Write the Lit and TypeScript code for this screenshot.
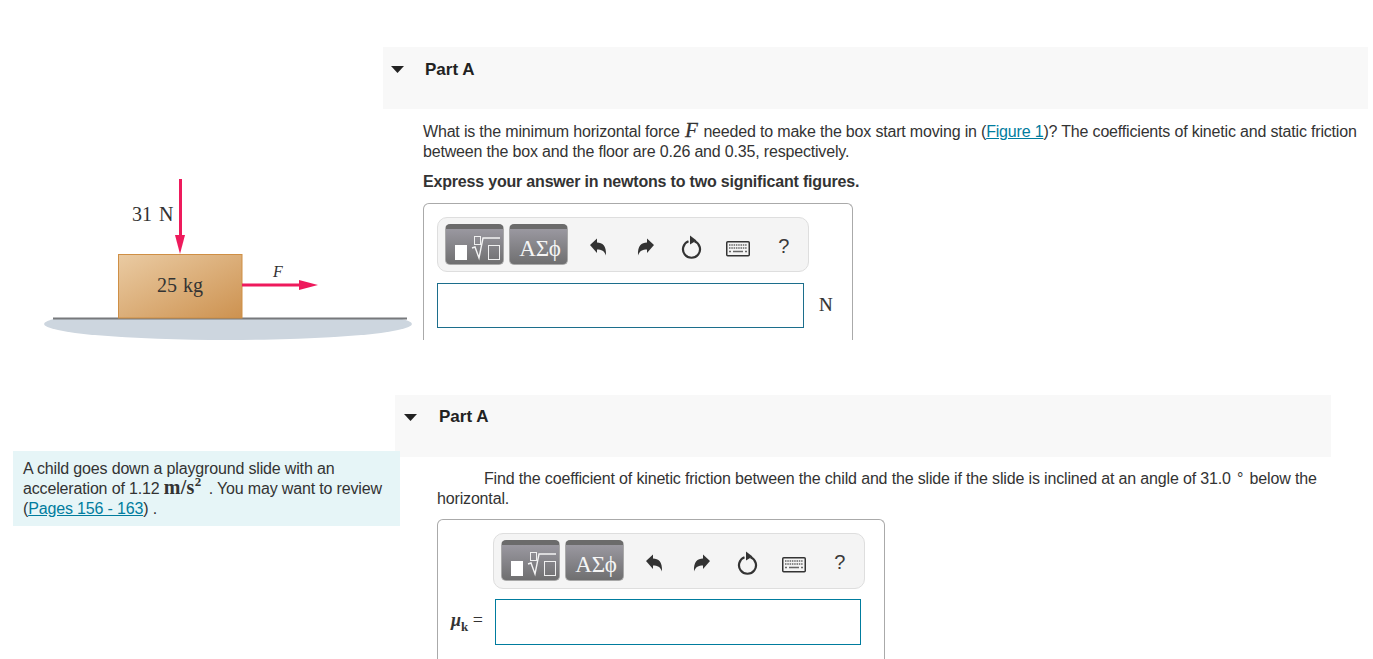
import { LitElement, html, css } from 'lit';
import { customElement } from 'lit/decorators.js';

@customElement('math-toolbar')
export class MathToolbar extends LitElement {
  static styles = css`
    :host {
      display: block;
    }
    .bar {
      box-sizing: border-box;
      width: 372px;
      height: 55px;
      padding: 6px 0 0 7px;
      display: flex;
      background: #f4f4f4;
      border: 1px solid #dedede;
      border-radius: 10px;
    }
    .tall {
      height: 56px;
    }
    .btn {
      box-sizing: border-box;
      flex: none;
      width: 59px;
      height: 41px;
      margin-right: 5px;
      position: relative;
      display: flex;
      align-items: center;
      justify-content: center;
      border: 1px solid #a9a9a9;
      border-top: 5px solid #6b6b6b;
      border-radius: 5px;
      background: linear-gradient(#9a98a0, #6f6f70);
      color: #f5f5f5;
      font: 23px "Liberation Serif", serif;
    }
    .btn svg {
      position: absolute;
      left: -1px;
      top: -5px;
    }
    .greek {
      padding: 4px 0 0 3px;
    }
    .tools {
      display: flex;
      flex: none;
      margin-left: 3px;
    }
    .tool {
      flex: none;
      box-sizing: border-box;
      width: 46.2px;
      height: 41px;
      padding-top: 4px;
      display: flex;
      align-items: center;
      justify-content: center;
      color: #3a3a3a;
      font: 20px "Liberation Sans", sans-serif;
    }
    .keys {
      margin-top: 4px;
    }
    .reset {
      margin-left: 2px;
    }
  `;

  static properties = { tall: { type: Boolean } };
  tall = false;

  protected render() {
    return html`
      <div class="bar ${this.tall ? 'tall' : ''}">
        <div class="btn">
          <svg width="59" height="41" viewBox="0 0 59 41">
            <rect x="10" y="21" width="12" height="15" fill="#fff" />
            <rect x="29.5" y="12.5" width="6" height="8" fill="none" stroke="#f0f0f0" />
            <path d="M27 24l3-1 4 11 4-20h17" fill="none" stroke="#f4f4f4" stroke-width="1.400" />
            <rect x="43.5" y="21.5" width="11" height="14" fill="none" stroke="#f0f0f0" />
          </svg>
        </div>
        <div class="btn"><span class="greek">ΑΣϕ</span></div>
        <div class="tools">
          <div class="tool">
            <svg width="18" height="18" viewBox="0 0 18 18">
              <path d="M0 7l7-6.500v4c5.500 0 9.500 3 9 13-1.500-4.500-4.500-6-9-6v3.500z" fill="#333" />
            </svg>
          </div>
          <div class="tool">
            <svg width="18" height="18" viewBox="0 0 18 18">
              <path d="M18 7l-7-6.500v4c-5.500 0-9.500 3-9 13 1.500-4.500 4.500-6 9-6v3.500z" fill="#333" />
            </svg>
          </div>
          <div class="tool">
            <svg class="reset" width="22" height="26" viewBox="0 0 22 26">
              <path d="M7.500 7.300a8.500 8.500 0 1 0 6 0" fill="none" stroke="#333" stroke-width="2.200" />
              <path d="M9 1.500l6.500 5-6.500 4z" fill="#333" />
            </svg>
          </div>
          <div class="tool">
            <svg class="keys" width="24" height="16" viewBox="0 0 24 16">
              <rect x="0.750" y="0.750" width="22.500" height="14" rx="1" fill="#f4f4f4" stroke="#333" stroke-width="1.500" />
              <path d="M3 4h18M3 7h18" stroke="#666" stroke-width="1.600" stroke-dasharray="1.500 .8" />
              <path d="M3 10.500h2M7 10.500h10M19 10.500h2" stroke="#666" stroke-width="1.600" />
            </svg>
          </div>
          <div class="tool">?</div>
        </div>
      </div>
    `;
  }
}

@customElement('app-root')
export class AppRoot extends LitElement {
  static styles = css`
    :host {
      display: block;
      width: 1373px;
      height: 659px;
      overflow: hidden;
      background: #fff;
      color: #333;
      font: 16px/20px "Liberation Sans", Arial, sans-serif;
      letter-spacing: -0.16px;
    }
    a {
      color: #007c9e;
    }
    p {
      margin: 0;
    }
    .row {
      display: flex;
    }
    .first {
      padding-top: 47px;
      height: 293px;
      box-sizing: content-box;
    }
    .second {
      margin-top: 55px;
    }
    .figure {
      flex: 0 0 383px;
      padding-top: 113px;
    }
    .figure svg {
      display: block;
      overflow: visible;
    }
    .figure text {
      font-family: "Liberation Serif", serif;
      font-size: 20px;
      letter-spacing: 0;
      word-spacing: 1px;
      fill: #333;
    }
    .figure text.load {
      word-spacing: 2px;
    }
    .figure text.force {
      font-size: 16px;
      font-style: italic;
    }
    .intro {
      flex: 0 0 auto;
      box-sizing: border-box;
      position: relative;
      z-index: 1;
      width: 387px;
      height: 75px;
      margin: 56px -5px 0 13px;
      padding: 8px 10px 0;
      background: #e6f5f7;
    }
    .intro .math {
      margin-right: 3px;
    }
    .part-a {
      width: 985px;
    }
    .part-b {
      width: 936px;
    }
    .head {
      height: 62px;
      box-sizing: border-box;
      display: flex;
      background: #f8f8f8;
      font-weight: bold;
      font-size: 17px;
      letter-spacing: 0;
      color: #222;
      padding-top: 12px;
    }
    .part-a .head {
      padding: 13px 0 0 8px;
    }
    .part-b .head {
      padding-left: 9px;
    }
    .caret {
      width: 13px;
      height: 7px;
      margin: 7px 21px 0 0;
      display: block;
    }
    .part-a .caret {
      margin-top: 6px;
    }
    .part-b .caret {
      margin-right: 22px;
    }
    .body-a {
      padding: 13px 0 0 40px;
    }
    .question {
      letter-spacing: -0.18px;
    }
    .body-b {
      padding: 12px 10px 0 42px;
    }
    .indent {
      text-indent: 47px;
    }
    .hint {
      margin-top: 10px;
      font-weight: bold;
      letter-spacing: -0.19px;
    }
    .math {
      font-family: "Liberation Serif", serif;
      font-size: 20px;
      line-height: 0;
      letter-spacing: 0.3px;
    }
    .bold {
      font-weight: bold;
    }
    .math i {
      font-size: 21px;
      margin: 0 1px;
      -webkit-text-stroke: 0.3px #333;
    }
    .deg {
      margin: 0 2px;
    }
    sup {
      font-size: 13px;
      line-height: 0;
      font-weight: bold;
    }
    .box {
      box-sizing: border-box;
      border: 1px solid #aaa;
      border-bottom: none;
      border-radius: 6px 6px 0 0;
    }
    .box-a {
      width: 430px;
      height: 137px;
      margin-top: 11px;
      padding: 13px 13px 0;
    }
    .box-b {
      width: 448px;
      height: 140px;
      margin-top: 10px;
      padding: 13px 0 0 55px;
    }
    .answer {
      display: flex;
      align-items: center;
    }
    .answer-a {
      margin-top: 11px;
    }
    .answer-b {
      margin: 10px 0 0 -42px;
    }
    .field {
      box-sizing: border-box;
      height: 45px;
      background: #fff;
    }
    .answer-a .field {
      width: 367px;
      border: 1px solid #1c6e8c;
    }
    .answer-b .field {
      width: 366px;
      height: 46px;
      border: 1px solid #007c9e;
    }
    .unit {
      margin: -2px 0 0 15px;
      font: 19px "Liberation Serif", serif;
      letter-spacing: 0;
      -webkit-text-stroke: 0.2px #333;
    }
    .label {
      flex: none;
      width: 44px;
      margin-top: -3px;
      white-space: nowrap;
      letter-spacing: 0;
      font: 18px "Liberation Serif", serif;
    }
    .label i {
      font-weight: bold;
    }
    .label sub {
      font-size: 13px;
      font-weight: bold;
      line-height: 0;
    }
  `;

  private caret() {
    return html`<svg class="caret" viewBox="0 0 13 7"><path d="M0 0h13L6.500 7z" fill="#222" /></svg>`;
  }

  protected render() {
    return html`
      <div class="row first">
        <div class="figure">
          <svg width="383" height="190" viewBox="0 160 383 190">
            <defs>
              <linearGradient id="crate" x1="0" y1="0" x2="1" y2="1">
                <stop offset="0" stop-color="#eacba3" />
                <stop offset="1" stop-color="#cd9250" />
              </linearGradient>
            </defs>
            <ellipse cx="228" cy="324" rx="184" ry="16" fill="#cdd6df" />
            <rect x="44" y="300" width="368" height="18" fill="#fff" />
            <rect x="53" y="317.500" width="354" height="2" fill="#77797c" />
            <rect x="118.500" y="254.500" width="123.500" height="63.500" fill="url(#crate)" stroke="#cf8f45" />
            <rect x="179" y="179" width="3" height="57" fill="#ee1a5c" />
            <path d="M175 235h10l-5 19z" fill="#ee1a5c" />
            <rect x="242" y="283.500" width="60" height="3" fill="#ee1a5c" />
            <path d="M299 280l19 5-19 5z" fill="#ee1a5c" />
            <text class="load" x="132" y="221">31 N</text>
            <text x="157" y="292">25 kg</text>
            <text class="force" x="273" y="277">F</text>
          </svg>
        </div>
        <div class="part-a">
          <div class="head">${this.caret()}<span>Part A</span></div>
          <div class="body-a">
            <p class="question">
              What is the minimum horizontal force <span class="math"><i>F</i></span> needed to make the box start
              moving in (<a href="#">Figure 1</a>)? The coefficients of kinetic and static friction between the box and
              the floor are 0.26 and 0.35, respectively.
            </p>
            <p class="hint">Express your answer in newtons to two significant figures.</p>
            <div class="box box-a">
              <math-toolbar></math-toolbar>
              <div class="answer answer-a">
                <div class="field"></div>
                <span class="unit">N</span>
              </div>
            </div>
          </div>
        </div>
      </div>
      <div class="row second">
        <div class="intro">
          A child goes down a playground slide with an acceleration of 1.12
          <span class="math bold">m/s<sup>2</sup></span> . You may want to review (<a href="#">Pages 156 - 163</a>) .
        </div>
        <div class="part-b">
          <div class="head">${this.caret()}<span>Part A</span></div>
          <div class="body-b">
            <p class="indent">
              Find the coefficient of kinetic friction between the child and the slide if the slide is inclined at an
              angle of 31.0<span class="deg"> °</span> below the horizontal.
            </p>
            <div class="box box-b">
              <math-toolbar .tall=${true}></math-toolbar>
              <div class="answer answer-b">
                <span class="label"><i>μ</i><sub>k</sub> =</span>
                <div class="field"></div>
              </div>
            </div>
          </div>
        </div>
      </div>
    `;
  }
}
